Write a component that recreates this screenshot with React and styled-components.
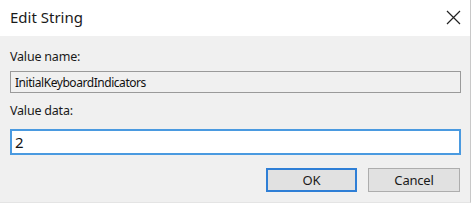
import React from "react";
import styled, { createGlobalStyle } from "styled-components";

const Global = createGlobalStyle`
  html, body { margin: 0; padding: 0; background: #ffffff; }
  body { font-family: "Noto Sans", "Open Sans", sans-serif; }
  * { box-sizing: border-box; }
`;

const Window = styled.div`
  width: 471px;
  height: 203px;
  display: flex;
  flex-direction: column;
  background: #f0f0f0;
  border-right: 1px solid #c8c8c8;
  border-bottom: 1px solid #e4e4e4;
`;

const TitleBar = styled.div`
  height: 36px;
  flex: none;
  background: #ffffff;
  display: flex;
  align-items: center;
  justify-content: space-between;
  padding: 0 0 0 10px;
`;

const Title = styled.span`
  font-size: 15px;
  color: #1a1a1a;
  margin-top: -2px;
`;

const CloseButton = styled.div`
  width: 34px;
  height: 30px;
  display: flex;
  align-items: center;
  justify-content: center;
  margin-top: -2px;
`;

const Body = styled.div`
  flex: 1;
  display: flex;
  flex-direction: column;
  padding: 12px 10px 0 10px;
`;

const Label = styled.div`
  font-size: 12.5px;
  color: #1a1a1a;
  height: 17px;
  line-height: 17px;
  letter-spacing: -0.2px;
`;

const Field = styled.div`
  width: 451px;
  height: ${(p) => (p.$active ? 26 : 22)}px;
  display: flex;
  align-items: center;
  padding-left: ${(p) => (p.$active ? 3 : 4)}px;
  background: ${(p) => (p.$active ? "#ffffff" : "#f0f0f0")};
  border: ${(p) => (p.$active ? "2px solid #4a9ae0" : "1px solid #9a9a9a")};
  color: #111;
  font-size: ${(p) => (p.$active ? "15px" : "12px")};
  letter-spacing: ${(p) => (p.$active ? "0" : "-0.45px")};
  margin-top: ${(p) => (p.$active ? 10 : 6)}px;
  margin-bottom: ${(p) => (p.$active ? 0 : 9)}px;
`;

const Buttons = styled.div`
  display: flex;
  justify-content: flex-end;
  gap: 11px;
  margin-top: 13px;
`;

const Button = styled.div`
  width: ${(p) => (p.$primary ? 91 : 92)}px;
  height: 24px;
  display: flex;
  align-items: center;
  justify-content: center;
  background: #e1e1e1;
  border: ${(p) => (p.$primary ? "2px solid #2f7fd6" : "1px solid #adadad")};
  font-size: 13px;
  color: #1a1a1a;
  letter-spacing: -0.2px;
`;

export default function App() {
  return (
    <>
      <Global />
      <Window>
        <TitleBar>
          <Title>Edit String</Title>
          <CloseButton>
            <svg width="15" height="15" viewBox="0 0 15 15">
              <path d="M1 1 L14 14 M14 1 L1 14" stroke="#222" strokeWidth="1.2" fill="none" />
            </svg>
          </CloseButton>
        </TitleBar>
        <Body>
          <Label>Value name:</Label>
          <Field>InitialKeyboardIndicators</Field>
          <Label>Value data:</Label>
          <Field $active>2</Field>
          <Buttons>
            <Button $primary>OK</Button>
            <Button>Cancel</Button>
          </Buttons>
        </Body>
      </Window>
    </>
  );
}
